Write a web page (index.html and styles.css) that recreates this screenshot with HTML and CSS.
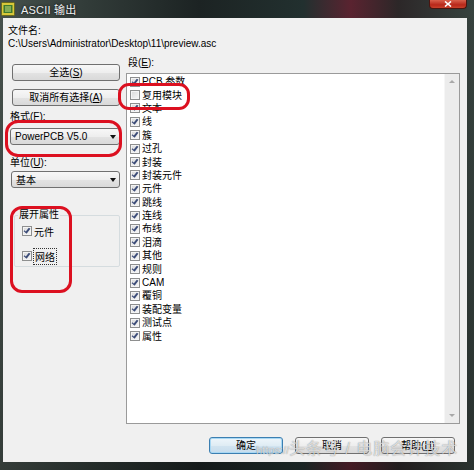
FILE: index.html
```html
<!DOCTYPE html>
<html lang="zh-CN">
<head>
    <meta charset="UTF-8">
    <meta name="viewport" content="width=device-width, initial-scale=1.0">
    <title>ASCII 输出</title>
    <link rel="stylesheet" href="styles.css">
</head>
<body>
    <div class="window">
        <div class="titlebar">
            <svg class="app-icon" width="14" height="14" viewBox="0 0 14 14">
                <rect x="0.5" y="0.5" width="13" height="13" rx="1" fill="#d8c83a" stroke="#6b6a1c"/>
                <rect x="2.5" y="3" width="9" height="8" fill="#3e7a2e"/>
                <path d="M4 5h6M4 7h6M4 9h6" stroke="#c9e07a" stroke-width="1"/>
            </svg>
            <span class="title">ASCII 输出</span>
            <span class="close-btn">
                <svg width="8" height="6" viewBox="0 0 8 6"><path d="M1 0.5L7 5.5M7 0.5L1 5.5" stroke="#fff" stroke-width="1.6"/></svg>
            </span>
        </div>

        <div class="client">
            <div class="file-label">文件名:</div>
            <div class="file-path">C:\Users\Administrator\Desktop\11\preview.asc</div>

            <div class="main">
                <div class="left-col">
                    <button class="btn side-btn">全选(<u>S</u>)</button>
                    <button class="btn side-btn second">取消所有选择(<u>A</u>)</button>

                    <div class="label fmt-label">格式(<u>F</u>):</div>
                    <div class="combo">PowerPCB V5.0<span class="arrow"></span></div>

                    <div class="label unit-label">单位(<u>U</u>):</div>
                    <div class="combo unit-combo">基本<span class="arrow"></span></div>

                    <fieldset class="group">
                        <legend>展开属性</legend>
                        <div class="check-row"><span class="cb on"></span>元件</div>
                        <div class="check-row second-row"><span class="cb on"></span><span class="focus">网络</span></div>
                    </fieldset>
                </div>

                <div class="right-col">
                    <div class="label seg-label">段(<u>E</u>):</div>
                    <div class="listbox">
                        <div class="items">
                            <div class="item"><span class="cb on"></span>PCB 参数</div>
                            <div class="item"><span class="cb"></span>复用模块</div>
                            <div class="item"><span class="cb on"></span>文本</div>
                            <div class="item"><span class="cb on"></span>线</div>
                            <div class="item"><span class="cb on"></span>簇</div>
                            <div class="item"><span class="cb on"></span>过孔</div>
                            <div class="item"><span class="cb on"></span>封装</div>
                            <div class="item"><span class="cb on"></span>封装元件</div>
                            <div class="item"><span class="cb on"></span>元件</div>
                            <div class="item"><span class="cb on"></span>跳线</div>
                            <div class="item"><span class="cb on"></span>连线</div>
                            <div class="item"><span class="cb on"></span>布线</div>
                            <div class="item"><span class="cb on"></span>泪滴</div>
                            <div class="item"><span class="cb on"></span>其他</div>
                            <div class="item"><span class="cb on"></span>规则</div>
                            <div class="item"><span class="cb on"></span>CAM</div>
                            <div class="item"><span class="cb on"></span>覆铜</div>
                            <div class="item"><span class="cb on"></span>装配变量</div>
                            <div class="item"><span class="cb on"></span>测试点</div>
                            <div class="item"><span class="cb on"></span>属性</div>
                        </div>
                        <div class="vscroll">
                            <span class="arrow-up"></span>
                            <span class="arrow-down"></span>
                        </div>
                    </div>
                </div>
            </div>

            <div class="footer">
                <button class="btn foot-btn default">确定</button>
                <button class="btn foot-btn">取消</button>
                <button class="btn foot-btn">帮助(<u>H</u>)</button>
            </div>
        </div>

        <!-- red annotation marks drawn over the dialog -->
        <div class="mark mark-reuse"></div>
        <div class="mark mark-format"></div>
        <div class="mark mark-group"></div>

        <div class="watermark"><span class="wm-url">https://</span>头条号 / 电脑会计技术</div>
    </div>
</body>
</html>
```

FILE: styles.css
```css
body { margin: 0; width: 474px; height: 470px; overflow: hidden; background: #1d2424; font-family: "Liberation Sans", "Noto Sans CJK SC", sans-serif; font-size: 10px; color: #000; }
u { text-decoration: underline; }

.window {
    position: relative;
    width: 474px;
    height: 470px;
    background:
        linear-gradient(180deg, rgba(0,0,0,0) 0%, rgba(0,0,0,0.25) 100%),
        linear-gradient(90deg, #46514c 0%, #323c39 18%, #1c2323 42%, #22302f 64%, #5a2330 74%, #2c2728 84%, #37433f 100%);
}

/* title bar */
.titlebar { height: 18px; display: flex; align-items: center; }
.app-icon { margin-left: 1px; flex: none; }
.title { margin-left: 6px; font-size: 11px; color: #eef0f0; text-shadow: 0 0 3px rgba(0,0,0,0.9); letter-spacing: 0.2px; }
.close-btn {
    margin-left: auto;
    margin-right: 7px;
    align-self: flex-start;
    width: 38px;
    height: 9px;
    border: 1px solid #4a1510;
    border-top: none;
    border-radius: 0 0 4px 4px;
    background: linear-gradient(#d9604c, #b8281a 60%, #c8402a);
    display: flex;
    align-items: center;
    justify-content: center;
    box-sizing: border-box;
}

/* dialog client area */
.client {
    margin: 0 7px 0 3px;
    height: 444px;
    background: #f0f0f0;
    padding: 7px 7px 0 5px;
    box-sizing: border-box;
}
.file-label, .file-path { line-height: 12px; height: 12px; }
.file-path { margin-top: 1px; white-space: nowrap; }

.main {
    margin: 7px 0 0 2px;
    height: 367px;
    display: grid;
    grid-template-columns: 110px 334px;
    column-gap: 6px;
}
.label { line-height: 12px; height: 12px; }

/* left column */
.left-col { padding-top: 7px; display: flex; flex-direction: column; }
.btn {
    font: inherit;
    color: #000;
    height: 17px;
    padding: 0;
    border: 1px solid #707070;
    border-radius: 3px;
    background: linear-gradient(#f7f7f7, #eeeeee 50%, #e3e3e3 51%, #d9d9d9);
    line-height: 15px;
    box-sizing: border-box;
}
.side-btn { margin-left: 2px; width: 108px; }
.side-btn.second { margin-top: 8px; }
.fmt-label { margin-top: 5px; }
.combo {
    margin-top: 5px;
    height: 17px;
    display: flex;
    align-items: center;
    padding-left: 4px;
    border: 1px solid #707070;
    border-radius: 3px;
    background: linear-gradient(#f7f7f7, #eeeeee 50%, #e3e3e3 51%, #d9d9d9);
    box-sizing: border-box;
}
.combo .arrow {
    margin-left: auto;
    margin-right: 3px;
    border-top: 4px solid #111;
    border-left: 3px solid transparent;
    border-right: 3px solid transparent;
}
.unit-label { margin-top: 12px; }
.unit-combo { margin-top: 2px; margin-left: 1px; }

.group {
    margin: 21px 0 0 4px;
    padding: 4px 4px 4px 7px;
    border: 1px solid #d5dcdf;
    border-radius: 2px;
    min-width: 0;
}
.group legend { margin-left: -4px; padding: 0 1px; line-height: 12px; }
.check-row { display: flex; align-items: center; height: 12px; }
.check-row .cb { margin-right: 2px; }
.second-row { margin-top: 13px; }
.focus { outline: 1px dotted #333; outline-offset: 0; padding: 0 1px; }

/* checkbox */
.cb {
    position: relative;
    flex: none;
    width: 10px;
    height: 10px;
    border: 1px solid #8e8f8f;
    background: linear-gradient(135deg, #d8d8d8, #f8f8f8);
    box-shadow: inset 0 0 0 1px #f4f4f4;
    box-sizing: border-box;
}
.cb.on::after {
    content: '';
    position: absolute;
    left: 2px;
    top: 0px;
    width: 2px;
    height: 5px;
    border: solid #3c4c78;
    border-width: 0 2px 1.5px 0;
    transform: rotate(38deg);
}

/* right column list */
.seg-label { padding-left: 2px; }
.listbox {
    margin-top: 4px;
    height: 351px;
    border: 1px solid #9a9a9a;
    background: #fff;
    display: flex;
    box-sizing: border-box;
}
.items { flex: 1; padding: 1px 0 0 3px; }
.item { display: flex; align-items: center; height: 13.4px; line-height: 13px; }
.item .cb { margin-right: 2px; }
.vscroll {
    width: 15px;
    background: #ececec;
    border-left: 1px solid #f6f6f6;
    display: flex;
    flex-direction: column;
    justify-content: space-between;
    align-items: center;
    padding: 6px 0;
    box-sizing: border-box;
}
.arrow-up { border-bottom: 3px solid #a8a8a8; border-left: 3px solid transparent; border-right: 3px solid transparent; }
.arrow-down { border-top: 3px solid #a8a8a8; border-left: 3px solid transparent; border-right: 3px solid transparent; }

/* bottom buttons */
.footer { margin-top: 13px; margin-right: 5px; display: flex; justify-content: flex-end; gap: 12px; }
.foot-btn { width: 74px; }
.btn.default {
    border-color: #3c7fb1;
    background: linear-gradient(#eef6fb, #dfecf4 50%, #d2e4f0 51%, #c6dcec);
    box-shadow: inset 0 0 0 1px #a8d8f4;
}

/* annotations */
.mark { position: absolute; border: 3px solid #dc1020; box-sizing: border-box; }
.mark-reuse { left: 118px; top: 83px; width: 72px; height: 27px; border-radius: 11px; }
.mark-format { left: 5px; top: 120px; width: 117px; height: 37px; border-radius: 13px; }
.mark-group { left: 10px; top: 206px; width: 62px; height: 87px; border-radius: 12px; }

.watermark {
    position: absolute;
    left: 256px;
    top: 439px;
    font-size: 16px;
    line-height: 20px;
    letter-spacing: 1px;
    color: rgba(255,255,255,0.7);
    text-shadow: 0 0 1px rgba(0,0,0,0.5);
    white-space: nowrap;
}
.wm-url { font-size: 11px; letter-spacing: 0; }
```
